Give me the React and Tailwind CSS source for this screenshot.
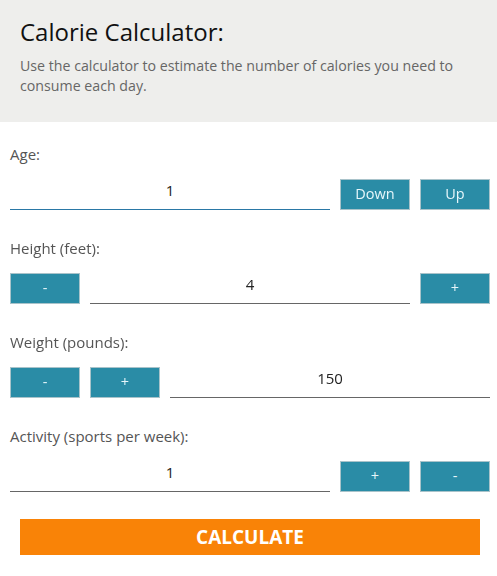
import React, { useState } from "react";

const font = { fontFamily: '"Open Sans", "Noto Sans", sans-serif' };

const Btn = ({ children, onClick, className = "" }) => (
  <button
    onClick={onClick}
    className={`w-[70px] h-[31px] shrink-0 bg-[#2a8ca6] border border-[#a9c3ca] text-[#e6f6fa] text-[14.5px] leading-none flex items-center justify-center ${className}`}
  >
    {children}
  </button>
);

const Field = ({ value, onChange, active }) => (
  <input
    value={value}
    autoFocus={active}
    onChange={(e) => onChange(e.target.value)}
    className={`flex-1 min-w-0 h-[31px] pb-[9px] bg-transparent text-center text-[15px] text-[#222] caret-black outline-none border-b ${
      active ? "border-[#2a78a6]" : "border-[#666]"
    }`}
  />
);

const Label = ({ children }) => (
  <div className="text-[15px] text-[#555] leading-5 mb-[15px]">{children}</div>
);

export default function App() {
  const [age, setAge] = useState("1");
  const [height, setHeight] = useState("4");
  const [weight, setWeight] = useState("150");
  const [activity, setActivity] = useState("1");

  const step = (v, set, d) => set(String((parseInt(v) || 0) + d));

  return (
    <div className="w-[497px] h-[576px] bg-white" style={font}>
      <div className="bg-[#eeeeec] h-[122px] px-5 pt-[16px]">
        <h1 className="text-[24px] leading-8 text-[#111]">Calorie Calculator:</h1>
        <p className="text-[14.2px] leading-5 text-[#666] mt-[8px]">
          Use the calculator to estimate the number of calories you need to
          consume each day.
        </p>
      </div>

      <div className="pl-[10px] pr-[7px] pt-[22px]">
        <Label>Age:</Label>
        <div className="flex items-center gap-[10px]">
          <Field value={age} onChange={setAge} active />
          <Btn onClick={() => step(age, setAge, -1)}>Down</Btn>
          <Btn onClick={() => step(age, setAge, 1)}>Up</Btn>
        </div>

        <div className="mt-[28px]">
          <Label>Height (feet):</Label>
          <div className="flex items-center gap-[10px]">
            <Btn onClick={() => step(height, setHeight, -1)}>-</Btn>
            <Field value={height} onChange={setHeight} />
            <Btn onClick={() => step(height, setHeight, 1)}>+</Btn>
          </div>
        </div>

        <div className="mt-[28px]">
          <Label>Weight (pounds):</Label>
          <div className="flex items-center gap-[10px]">
            <Btn onClick={() => step(weight, setWeight, -1)}>-</Btn>
            <Btn onClick={() => step(weight, setWeight, 1)}>+</Btn>
            <Field value={weight} onChange={setWeight} />
          </div>
        </div>

        <div className="mt-[28px]">
          <Label>Activity (sports per week):</Label>
          <div className="flex items-center gap-[10px]">
            <Field value={activity} onChange={setActivity} />
            <Btn onClick={() => step(activity, setActivity, 1)}>+</Btn>
            <Btn onClick={() => step(activity, setActivity, -1)}>-</Btn>
          </div>
        </div>

        <div className="px-[10px] mt-[27px]">
          <button className="w-full h-[36px] bg-[#f98307] text-white font-bold text-[19px]">
            CALCULATE
          </button>
        </div>
      </div>
    </div>
  );
}
